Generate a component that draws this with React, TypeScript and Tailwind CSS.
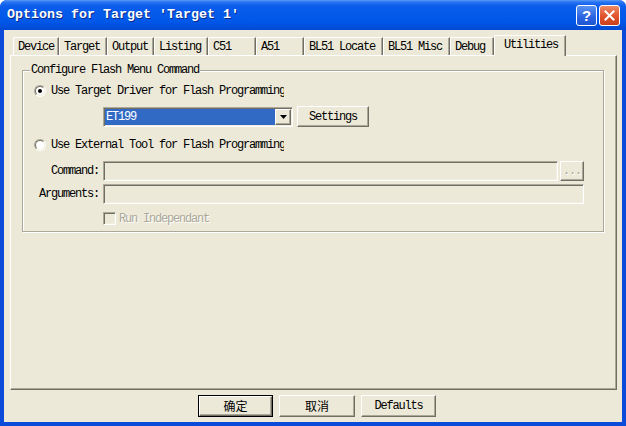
import React from 'react';

const TABS = [
  { label: 'Device', w: 'w-[46px]' },
  { label: 'Target', w: 'w-[48px]' },
  { label: 'Output', w: 'w-[47px]' },
  { label: 'Listing', w: 'w-[54px]' },
  { label: 'C51', w: 'w-[48px]' },
  { label: 'A51', w: 'w-[48px]' },
  { label: 'BL51 Locate', w: 'w-[79px]' },
  { label: 'BL51 Misc', w: 'w-[67px]' },
  { label: 'Debug', w: 'w-[44px]' },
];

const raised =
  'border border-t-white border-l-white border-r-[#716F64] border-b-[#716F64] shadow-[inset_-1px_-1px_0_#ACA899] bg-[#ECE9D8]';
const sunken =
  'border border-t-[#ACA899] border-l-[#ACA899] border-b-white border-r-white shadow-[inset_1px_1px_0_#716F64,inset_-1px_-1px_0_#F1EFE2]';

function Radio({ checked }: { checked?: boolean }) {
  return (
    <span className="w-[12px] h-[12px] shrink-0 rounded-full border border-t-[#ACA899] border-l-[#ACA899] border-b-white border-r-white">
      <span className="flex items-center justify-center w-full h-full rounded-full border border-t-[#716F64] border-l-[#716F64] border-b-[#F1EFE2] border-r-[#F1EFE2] bg-white">
        {checked && <span className="w-[4px] h-[4px] rounded-full bg-black" />}
      </span>
    </span>
  );
}

function Button({ children, wide, isDefault, cjk }: { children: React.ReactNode; wide: string; isDefault?: boolean; cjk?: boolean }) {
  const text = cjk ? "font-['Noto_Sans_CJK_SC',sans-serif] text-[12px] tracking-normal" : '';
  if (isDefault) {
    return (
      <div className={`${wide} h-[22px] border border-black`}>
        <div className={`w-full h-full flex items-center justify-center ${raised} ${text}`}>{children}</div>
      </div>
    );
  }
  return <div className={`${wide} h-[22px] flex items-center justify-center ${raised} ${text}`}>{children}</div>;
}

export default function App() {
  return (
    <div className="w-[626px] h-[426px] flex flex-col bg-[#0A4BD9] rounded-t-[7px] overflow-hidden font-['Liberation_Mono',monospace] text-[12px] tracking-[-1.2px] text-black leading-none">
      {/* title bar */}
      <div className="h-[30px] shrink-0 flex items-center pl-[7px] pr-[6px] bg-[linear-gradient(to_bottom,#5A9BF7_0px,#2A74F2_2px,#0A5DEC_6px,#0057E8_22px,#0049D2_30px)]">
        <span className="text-white font-bold text-[13.33px] tracking-normal [text-shadow:1px_1px_0_#0A2A8A]">
          Options for Target 'Target 1'
        </span>
        <div className="ml-auto flex gap-[2px]">
          <div className="w-[21px] h-[21px] rounded-[3px] border border-white bg-[linear-gradient(to_bottom,#5B92F2,#2A63E0_60%,#1E55D2)] flex items-center justify-center text-white font-bold text-[15px] tracking-normal font-['Liberation_Sans',sans-serif]">
            ?
          </div>
          <div className="w-[21px] h-[21px] rounded-[3px] border border-white bg-[linear-gradient(to_bottom,#EE8A66,#E0532D_55%,#C8401C)] flex items-center justify-center">
            <svg width="11" height="11" viewBox="0 0 11 11">
              <path d="M1.5 1.5L9.5 9.5M9.5 1.5L1.5 9.5" stroke="#fff" strokeWidth="2" strokeLinecap="square" />
            </svg>
          </div>
        </div>
      </div>

      {/* client area */}
      <div className="flex-1 mx-[4px] mb-[4px] bg-[#ECE9D8] flex flex-col pt-[5px]">
        {/* tabs */}
        <div className="h-[20px] flex items-end pl-[9px]">
          {TABS.map((t) => (
            <div
              key={t.label}
              className={`${t.w} h-[18px] flex items-center pl-[4px] whitespace-nowrap border-t border-l border-t-white border-l-white border-r border-r-[#716F64] shadow-[inset_-1px_0_0_#ACA899] rounded-tl-[2px]`}
            >
              {t.label}
            </div>
          ))}
          <div className="relative z-10 -mb-px w-[72px] h-[21px] flex items-center pl-[9px] pb-[2px] bg-[#ECE9D8] border-t border-l border-t-white border-l-white border-r border-r-[#716F64] shadow-[inset_-1px_0_0_#ACA899] rounded-tl-[2px]">
            Utilities
          </div>
        </div>

        {/* tab panel */}
        <div className="ml-[6px] w-[607px] h-[335px] border border-t-white border-l-white border-r-[#716F64] border-b-[#716F64] shadow-[inset_-1px_-1px_0_#ACA899]">
          <fieldset className="ml-[11px] mt-[8px] w-[582px] border border-[#ACA899] shadow-[inset_1px_1px_0_#fff,1px_1px_0_#fff] pb-[6px]">
            <legend className="ml-[7px] px-[1px] h-[12px] leading-[12px] bg-[#ECE9D8]">Configure Flash Menu Command</legend>

            <div className="mt-[8px] h-[14px] flex items-center pl-[11px] gap-[5px]">
              <Radio checked />
              <span className="w-[233px] overflow-hidden whitespace-nowrap">Use Target Driver for Flash Programming</span>
            </div>

            <div className="mt-[8px] h-[21px] flex items-start pl-[80px] gap-[4px]">
              <div className={`mt-[1px] w-[190px] h-[20px] bg-white flex ${sunken} p-[1px]`}>
                <div className="flex-1 bg-[#316AC5] text-white flex items-center pl-[1px]">ET199</div>
                <div className={`w-[16px] h-full flex items-center justify-center ${raised}`}>
                  <svg width="7" height="4" viewBox="0 0 7 4">
                    <polygon points="0,0 7,0 3.5,4" fill="#000" />
                  </svg>
                </div>
              </div>
              <div className={`w-[72px] h-[21px] flex items-center justify-center ${raised}`}>Settings</div>
            </div>

            <div className="mt-[11px] h-[14px] flex items-center pl-[11px] gap-[5px]">
              <Radio />
              <span className="w-[233px] overflow-hidden whitespace-nowrap">Use External Tool for Flash Programming</span>
            </div>

            <div className="mt-[9px] h-[20px] flex items-center">
              <span className="w-[77px] text-right pr-[1px]">Command:</span>
              <div className={`ml-[3px] w-[455px] h-[20px] ${sunken}`} />
              <div className={`ml-[2px] w-[24px] h-[20px] flex items-center justify-center text-[#ACA899] [text-shadow:1px_1px_0_#fff] ${raised}`}>
                ...
              </div>
            </div>

            <div className="mt-[3px] h-[20px] flex items-center">
              <span className="w-[77px] text-right pr-[1px]">Arguments:</span>
              <div className={`ml-[3px] w-[481px] h-[20px] ${sunken}`} />
            </div>

            <div className="mt-[8px] h-[13px] flex items-center pl-[80px] gap-[3px]">
              <span className={`w-[13px] h-[13px] bg-[#ECE9D8] ${sunken}`} />
              <span className="text-[#ACA899] [text-shadow:1px_1px_0_#fff]">Run Independant</span>
            </div>
          </fieldset>
        </div>

        {/* buttons */}
        <div className="mt-[5px] flex pl-[194px] gap-[6px]">
          <Button wide="w-[75px]" isDefault cjk>
            确定
          </Button>
          <Button wide="w-[76px]" cjk>
            取消
          </Button>
          <Button wide="w-[75px]">Defaults</Button>
        </div>
      </div>
    </div>
  );
}
